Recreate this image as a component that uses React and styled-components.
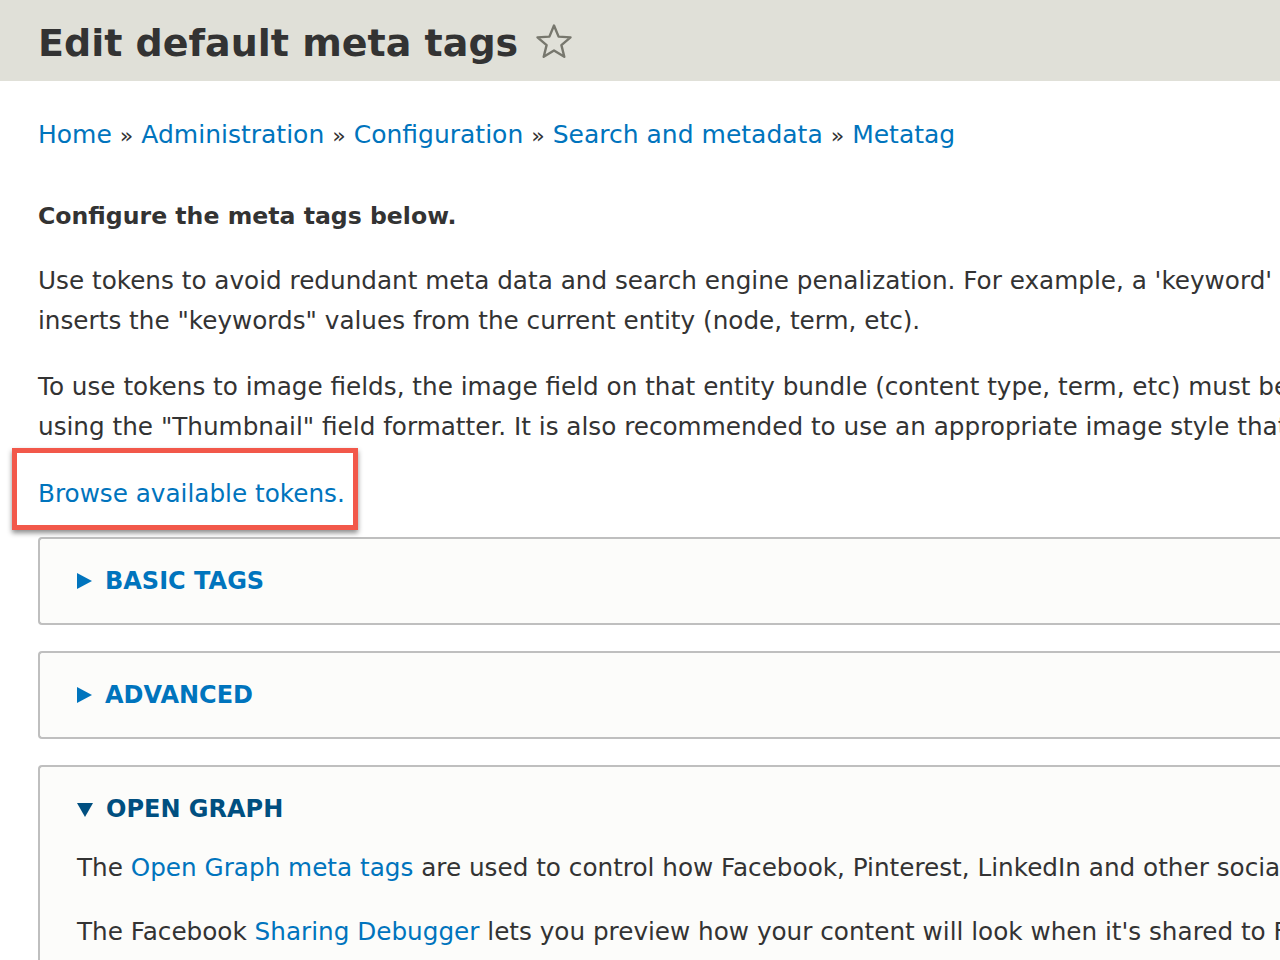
import React from "react";
import styled, { createGlobalStyle } from "styled-components";

const GlobalStyle = createGlobalStyle`
  html, body {
    margin: 0;
    padding: 0;
    background: #ffffff;
    overflow: hidden;
  }
  body {
    font-family: "DejaVu Sans", "Liberation Sans", sans-serif;
    color: #333333;
  }
`;

const Page = styled.div`
  width: 1280px;
  height: 960px;
  overflow: hidden;
`;

const HeaderBar = styled.header`
  height: 81px;
  background: #e0e0d8;
  display: flex;
  align-items: center;
  padding: 0 38px;
  gap: 16px;
`;

const PageTitle = styled.h1`
  margin: 0;
  font-size: 38px;
  font-weight: 700;
  color: #333333;
  line-height: 1;
  padding-top: 4px;
`;

const StarIcon = styled.svg`
  width: 40px;
  height: 38px;
  flex: none;
  margin-top: 2px;
`;

const Content = styled.main`
  padding: 0 0 0 38px;
  width: 1700px;
`;

const Breadcrumb = styled.nav`
  margin-top: 38px;
  font-size: 25px;
  line-height: 32px;
  white-space: nowrap;
  color: #333333;
`;

const Link = styled.a`
  color: #0074bd;
  text-decoration: none;
`;

const Sep = styled.span`
  margin: 0 8px;
  font-size: 22px;
`;

const Lead = styled.p`
  margin: 48px 0 0;
  font-size: 23.6px;
  font-weight: 700;
  line-height: 32px;
`;

const Para = styled.p`
  margin: ${(p) => p.$top || "26px"} 0 0;
  font-size: 24.7px;
  line-height: 40px;
  white-space: nowrap;
`;

const TokenWrap = styled.div`
  position: relative;
  display: inline-block;
  margin-top: 27px;
  font-size: 24.7px;
  line-height: 40px;
`;

const Highlight = styled.span`
  position: absolute;
  left: -26px;
  top: -26px;
  width: 336px;
  height: 72px;
  border: 5px solid #f2584a;
  box-shadow: 0 3px 5px rgba(0, 0, 0, 0.45);
  pointer-events: none;
`;

const Details = styled.section`
  margin-top: ${(p) => p.$top || "26px"};
  border: 2px solid #bfbfbf;
  border-right: none;
  border-radius: 4px 0 0 4px;
  background: #fcfcfa;
  box-sizing: border-box;
  padding: ${(p) => (p.$open ? "26px 37px 20px" : "0 37px")};
  height: ${(p) => (p.$open ? "auto" : "88px")};
  display: ${(p) => (p.$open ? "block" : "flex")};
  align-items: center;
`;

const Summary = styled.div`
  display: flex;
  align-items: center;
  gap: 13px;
  height: 32px;
  font-size: 24px;
  font-weight: 700;
  text-transform: uppercase;
  color: ${(p) => (p.$open ? "#004f80" : "#0074bd")};
`;

const Arrow = styled.span`
  width: 0;
  height: 0;
  flex: none;
  ${(p) =>
    p.$open
      ? `
    border-left: 8px solid transparent;
    border-right: 8px solid transparent;
    border-top: 14px solid #004f80;
    margin-top: 2px;
  `
      : `
    border-top: 8px solid transparent;
    border-bottom: 8px solid transparent;
    border-left: 15px solid #0074bd;
  `}
`;

const DetailText = styled.p`
  margin: ${(p) => p.$top || "24px"} 0 0;
  font-size: 24.7px;
  line-height: 40px;
  white-space: nowrap;
`;

export default function App() {
  return (
    <Page>
      <GlobalStyle />
      <HeaderBar>
        <PageTitle>Edit default meta tags</PageTitle>
        <StarIcon viewBox="0 0 40 38">
          <path
            d="M20 2.5 L24.6 13.6 L36.5 14.4 L27.4 22.1 L30.3 33.8 L20 27.4 L9.7 33.8 L12.6 22.1 L3.5 14.4 L15.4 13.6 Z"
            fill="none"
            stroke="#77776d"
            strokeWidth="2.4"
            strokeLinejoin="round"
          />
        </StarIcon>
      </HeaderBar>
      <Content>
        <Breadcrumb>
          <Link href="#">Home</Link>
          <Sep>»</Sep>
          <Link href="#">Administration</Link>
          <Sep>»</Sep>
          <Link href="#">Configuration</Link>
          <Sep>»</Sep>
          <Link href="#">Search and metadata</Link>
          <Sep>»</Sep>
          <Link href="#">Metatag</Link>
        </Breadcrumb>

        <Lead>Configure the meta tags below.</Lead>

        <Para $top="29px">
          Use tokens to avoid redundant meta data and search engine
          penalization. For example, a 'keyword' value of
          "[node:field_keywords]" automatically
          <br />
          inserts the "keywords" values from the current entity (node, term,
          etc).
        </Para>

        <Para>
          To use tokens to image fields, the image field on that entity bundle
          (content type, term, etc) must be configured to display
          <br />
          using the "Thumbnail" field formatter. It is also recommended to use
          an appropriate image style that is large enough.
        </Para>

        <TokenWrap>
          <Link href="#">Browse available tokens.</Link>
          <Highlight />
        </TokenWrap>

        <Details $top="23px">
          <Summary>
            <Arrow />
            Basic tags
          </Summary>
        </Details>

        <Details>
          <Summary>
            <Arrow />
            Advanced
          </Summary>
        </Details>

        <Details $open>
          <Summary $open>
            <Arrow $open />
            Open Graph
          </Summary>
          <DetailText $top="23px">
            The <Link href="#">Open Graph meta tags</Link> are used to control
            how Facebook, Pinterest, LinkedIn and other social networking sites
            interpret the site's content.
          </DetailText>
          <DetailText>
            The Facebook <Link href="#">Sharing Debugger</Link> lets you preview
            how your content will look when it's shared to Facebook and debug
            any problems with your Open Graph tags.
          </DetailText>
        </Details>
      </Content>
    </Page>
  );
}
